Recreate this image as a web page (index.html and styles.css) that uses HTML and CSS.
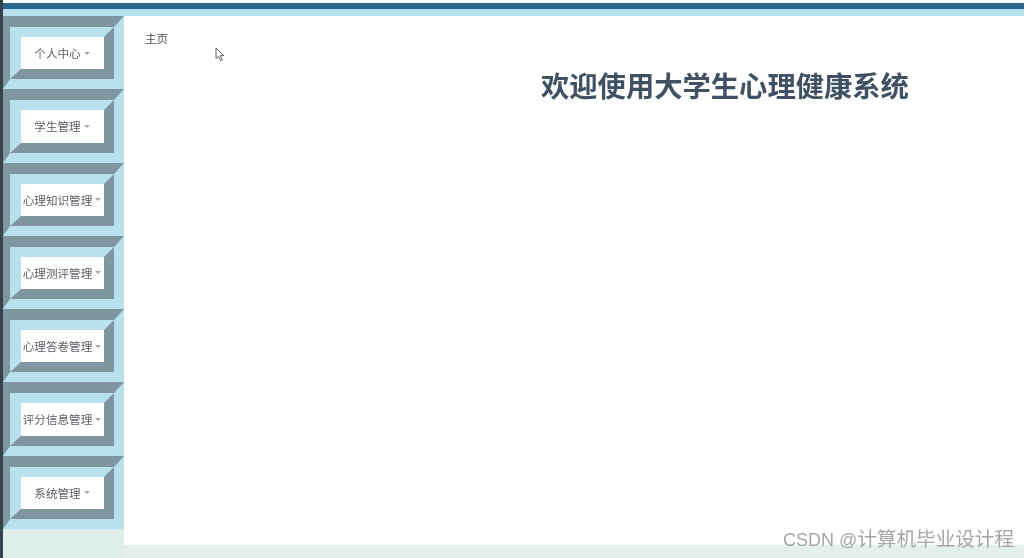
FILE: index.html
```html
<!DOCTYPE html>
<html lang="zh-CN">
<head>
<meta charset="utf-8">
<title>大学生心理健康系统</title>
<link rel="stylesheet" href="styles.css">
</head>
<body>
<div class="screen">
  <header class="topbar"><div class="topbar-dark"></div><div class="topbar-light"></div></header>
  <div class="body-row">
    <aside class="sidebar">
      <nav class="menu">
        <div class="menu-item"><div class="menu-bevel"><button class="menu-btn">个人中心<i class="caret"></i></button></div></div>
        <div class="menu-item"><div class="menu-bevel"><button class="menu-btn">学生管理<i class="caret"></i></button></div></div>
        <div class="menu-item"><div class="menu-bevel"><button class="menu-btn">心理知识管理<i class="caret"></i></button></div></div>
        <div class="menu-item"><div class="menu-bevel"><button class="menu-btn">心理测评管理<i class="caret"></i></button></div></div>
        <div class="menu-item"><div class="menu-bevel"><button class="menu-btn">心理答卷管理<i class="caret"></i></button></div></div>
        <div class="menu-item"><div class="menu-bevel"><button class="menu-btn">评分信息管理<i class="caret"></i></button></div></div>
        <div class="menu-item"><div class="menu-bevel"><button class="menu-btn">系统管理<i class="caret"></i></button></div></div>
      </nav>
    </aside>
    <main class="main">
      <div class="content">
        <div class="crumb">主页</div>
        <h1 class="title">欢迎使用大学生心理健康系统</h1>
      </div>
      <div class="footer-strip"></div>
    </main>
  </div>
  <svg class="cursor" width="11" height="15" viewBox="0 0 11 15"><path d="M1 1v10.5l2.6-2.2 2 4.4 1.8-.8-2-4.3h3.4z" fill="#fff" stroke="#5a6068" stroke-width="1"/></svg>
  <div class="watermark">CSDN @<span class="watermark-cjk">计算机毕业设计程</span></div>
</div>
</body>
</html>
```
FILE: styles.css
```css
html, body {
  margin: 0;
  padding: 0;
  height: 100%;
  overflow: hidden;
  background: #fff;
}
.screen {
  position: relative;
  width: 1024px;
  height: 558px;
  box-sizing: border-box;
  padding-top: 3px;
  border-left: 3px solid #37444e;
  display: flex;
  flex-direction: column;
  font-family: "Noto Sans CJK SC", "Noto Sans", sans-serif;
  color: #555a60;
  filter: blur(0.35px);
}
.topbar { flex: none; }
.topbar-dark { height: 6px; background: #29678c; }
.topbar-light { height: 7px; background: #b9e1ed; }
.body-row { flex: 1; display: flex; min-height: 0; }
.sidebar {
  flex: none;
  width: 121px;
  background: #e0eeea;
}
.menu {
  height: 513px;
  background: #b9e1ed;
  display: flex;
  flex-direction: column;
}
.menu-item {
  flex: none;
  height: 73.25px;
  box-sizing: border-box;
  border-style: solid;
  border-width: 11px 10px 10px 7px;
  border-color: #7f959f #b9e1ed #b9e1ed #7f959f;
}
.menu-bevel {
  height: 100%;
  box-sizing: border-box;
  border-style: solid;
  border-width: 10px;
  border-left-width: 11px;
  border-color: #b9e1ed #7f959f #7f959f #b9e1ed;
}
.menu-btn {
  display: flex;
  align-items: center;
  justify-content: center;
  gap: 3px;
  width: 100%;
  height: 100%;
  padding: 0 1px 0 0;
  border: 0;
  background: #fff;
  font: 11.6px "Noto Sans CJK SC", sans-serif;
  color: #5c6066;
  white-space: nowrap;
}
.caret {
  width: 0;
  height: 0;
  border-style: solid;
  border-width: 3px 3.75px 0;
  border-color: #a3a6ab transparent transparent;
}
.main {
  flex: 1;
  min-width: 0;
  display: flex;
  flex-direction: column;
  background: #fff;
}
.content { flex: 1; padding: 14px 0 0 21px; }
.crumb { font-size: 11.6px; line-height: 17px; color: #4c5055; }
.title {
  margin: 20px 0 0 396px;
  font-size: 28.3px;
  line-height: 36px;
  font-weight: 700;
  color: #415164;
  white-space: nowrap;
}
.footer-strip { flex: none; height: 13px; background: #e3efeb; }
.cursor { position: absolute; left: 212px; top: 47px; }
.watermark {
  position: absolute;
  left: 780px;
  top: 526px;
  font: 18px/26px "Liberation Sans", "Noto Sans CJK SC", sans-serif;
  color: #a4a6a6;
  white-space: nowrap;
}
.watermark-cjk { font-size: 19.6px; }
```
